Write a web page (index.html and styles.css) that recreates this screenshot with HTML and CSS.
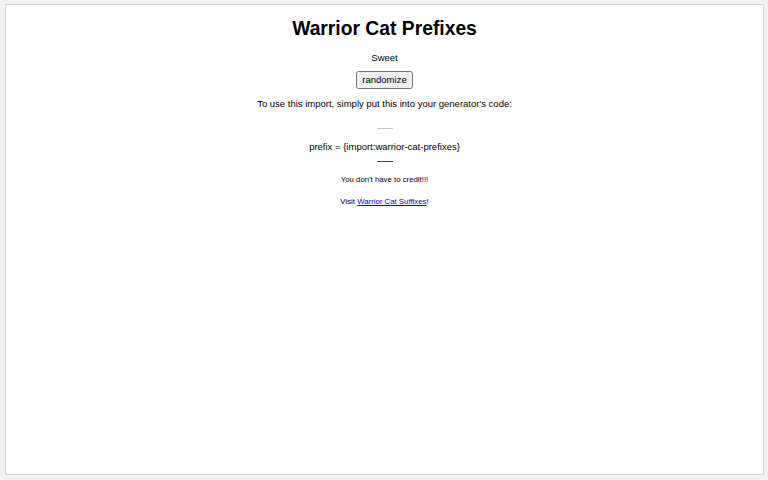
FILE: index.html
```
<!DOCTYPE html>
<html lang="en">
<head>
<meta charset="utf-8">
<title>Warrior Cat Prefixes</title>
<link rel="stylesheet" href="styles.css">
</head>
<body>
<div id="page">
  <h1>Warrior Cat Prefixes</h1>
  <p id="output">Sweet</p>
  <p class="btn-row"><button type="button">randomize</button></p>
  <p>To use this import, simply put this into your generator's code:</p>
  <hr class="faint">
  <p>prefix = {import:warrior-cat-prefixes}</p>
  <hr class="dark">
  <p class="small">You don't have to credit!!!</p>
  <p class="small">Visit <a href="#">Warrior Cat Suffixes</a>!</p>
</div>
</body>
</html>
```
FILE: styles.css
```
html, body{
  margin:0;
  height:100%;
}
body{
  background:#f2f2f2;
  font-family:"Liberation Sans", Arial, sans-serif;
  padding:4px 4px 5px 5px;
  box-sizing:border-box;
}
div#page{
  background:#fff;
  border:1px solid #d8d8d8;
  height:100%;
  box-sizing:border-box;
  text-align:center;
  font-size:9.5px;
  line-height:11px;
  padding-top:13px;
}
h1{
  font-size:19.3px;
  line-height:22px;
  margin:0 0 12px 0;
}
p{
  margin:0 0 9px 0;
}
p#output{
  margin-bottom:8px;
}
button{
  font-family:"Liberation Sans", Arial, sans-serif;
  font-size:9.5px;
  line-height:11px;
  padding:1px 4px 2px;
}
hr{
  width:16px;
  border:0;
  border-top:1px solid #444;
}
hr.faint{
  border-top-color:#c8c8c8;
  margin:19px auto 12px;
}
hr.dark{
  margin:8px auto 13px;
}
p.small{
  font-size:7.8px;
  line-height:9px;
  margin-bottom:13px;
}
a{
  color:#00e;
}
```
